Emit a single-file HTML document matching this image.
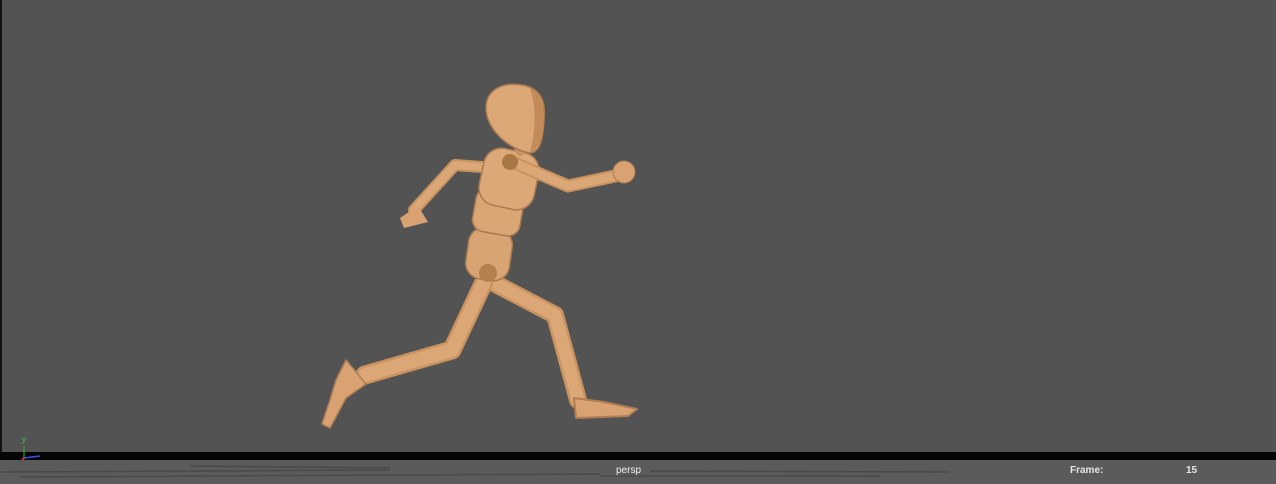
<!DOCTYPE html>
<html><head><meta charset="utf-8"><style>
html,body{margin:0;padding:0;background:#535353;width:1276px;height:484px;overflow:hidden;font-family:"Liberation Sans",sans-serif}
svg{position:absolute;left:0;top:0}
.t{position:absolute;color:#e6e6e6;font-size:10px;font-weight:bold}
</style></head><body>
<svg width="1276" height="484">
<rect x="0" y="0" width="1276" height="484" fill="#535353"/>
<rect x="0" y="0" width="2" height="484" fill="#111"/>
<rect x="0" y="452" width="1276" height="8" fill="#050505"/>
<rect x="0" y="460" width="1276" height="24" fill="#5b5b5b"/>
<g stroke="#4a4a4a" stroke-width="1.5">
<line x1="0" y1="472" x2="390" y2="470"/><line x1="20" y1="477" x2="600" y2="474"/><line x1="190" y1="466" x2="390" y2="468"/><line x1="650" y1="471" x2="950" y2="472"/><line x1="600" y1="476" x2="880" y2="476"/>
</g>
<g stroke-linecap="round" stroke-linejoin="round" fill="none">
<polyline points="492,282 555,315 578,400" stroke="#c9935f" stroke-width="18"/>
<polyline points="492,282 555,315 578,400" stroke="#dca777" stroke-width="13"/>
<path d="M574,398 L576,418 L628,416 L637,409 L604,402 Z" fill="#d8a273" stroke="#b07e52" stroke-width="2"/>
<polyline points="495,168 455,165 414,210" stroke="#c9935f" stroke-width="12"/>
<polyline points="495,168 455,165 414,210" stroke="#dca777" stroke-width="8"/>
<path d="M400,218 L418,206 L428,222 L404,228 Z" fill="#d8a273"/>
<polyline points="484,282 452,350 365,375" stroke="#c9935f" stroke-width="19"/>
<polyline points="484,282 452,350 365,375" stroke="#dca777" stroke-width="14"/>
<path d="M366,384 L346,360 L336,380 L330,400 L322,424 L330,428 L346,398 Z" fill="#d8a273" stroke="#b07e52" stroke-width="1.5"/>
</g>
<g stroke="#a87a4f" stroke-width="1.5">
<rect x="467" y="228" width="44" height="52" rx="16" fill="#d9a474" transform="rotate(8 489 254)"/>
<rect x="474" y="190" width="48" height="44" rx="12" fill="#dba676" transform="rotate(10 498 212)"/>
<rect x="481" y="150" width="56" height="58" rx="18" fill="#dda878" transform="rotate(12 509 179)"/>
</g>
<circle cx="488" cy="273" r="9" fill="#b4804f"/>
<line x1="515" y1="140" x2="520" y2="152" stroke="#c9935f" stroke-width="8" stroke-linecap="round"/>
<g stroke-linecap="round" fill="none">
<polyline points="512,162 568,186 620,175" stroke="#c9935f" stroke-width="13"/>
<polyline points="512,162 568,186 620,175" stroke="#dca777" stroke-width="9"/>
</g>
<circle cx="624" cy="172" r="11" fill="#d8a273" stroke="#b07e52"/>
<circle cx="510" cy="162" r="8" fill="#a87645"/>
<path d="M486,108 C486,88 505,82 522,85 C540,88 546,100 544,120 C543,140 540,152 530,153 C510,150 486,130 486,108 Z" fill="#dca777" stroke="#a87a4f" stroke-width="1.5"/>
<path d="M530,88 C542,92 546,110 543,130 C541,145 536,151 530,152 C536,130 536,105 530,88 Z" fill="#c28b59"/>
<line x1="24" y1="446" x2="24" y2="458" stroke="#2fbf2f"/>
<line x1="24" y1="458" x2="40" y2="456" stroke="#3a52e8" stroke-width="1.5"/>
<line x1="24" y1="458" x2="22" y2="460" stroke="#d03030" stroke-width="2"/>
<text x="22" y="442" fill="#3fcf3f" font-size="8" font-family="Liberation Sans">y</text>
</svg>
<div class="t" style="left:616px;top:465px;font-weight:normal;color:#f0f0f0">persp</div>
<div class="t" style="left:1070px;top:465px">Frame:</div>
<div class="t" style="left:1186px;top:465px">15</div>
</body></html>
